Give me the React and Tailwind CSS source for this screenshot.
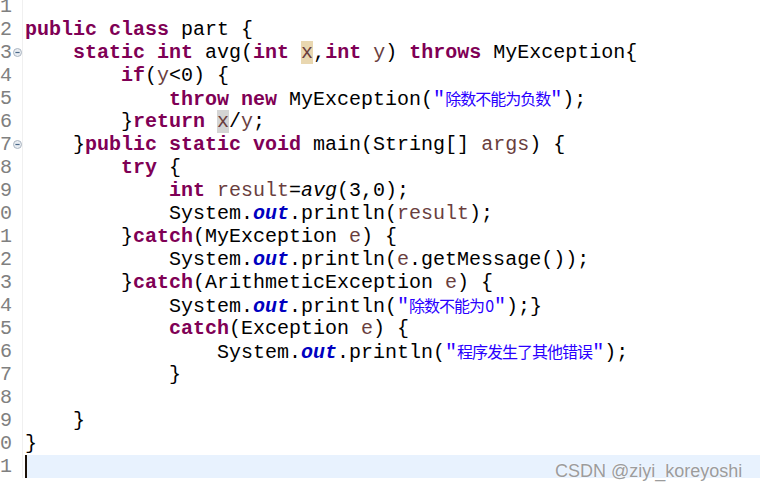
import React from "react";

// token kinds: k keyword, p plain, v local variable, s string, c cjk string text,
// f static field, m static method, hx / hg highlighted occurrences
const lines = [
  [],
  [["public", "k"], [" ", "p"], ["class", "k"], [" part {", "p"]],
  [
    ["    ", "p"], ["static", "k"], [" ", "p"], ["int", "k"], [" avg(", "p"], ["int", "k"], [" ", "p"],
    ["x", "hx"], [",", "p"], ["int", "k"], [" ", "p"], ["y", "v"], [") ", "p"], ["throws", "k"], [" MyException{", "p"],
  ],
  [["        ", "p"], ["if", "k"], ["(", "p"], ["y", "v"], ["<0) {", "p"]],
  [
    ["            ", "p"], ["throw", "k"], [" ", "p"], ["new", "k"], [" MyException(", "p"],
    ['"', "s"], ["除数不能为负数", "c"], ['"', "s"], [");", "p"],
  ],
  [["        }", "p"], ["return", "k"], [" ", "p"], ["x", "hg"], ["/", "p"], ["y", "v"], [";", "p"]],
  [
    ["    }", "p"], ["public", "k"], [" ", "p"], ["static", "k"], [" ", "p"], ["void", "k"],
    [" main(String[] ", "p"], ["args", "v"], [") {", "p"],
  ],
  [["        ", "p"], ["try", "k"], [" {", "p"]],
  [["            ", "p"], ["int", "k"], [" ", "p"], ["result", "v"], ["=", "p"], ["avg", "m"], ["(3,0);", "p"]],
  [["            System.", "p"], ["out", "f"], [".println(", "p"], ["result", "v"], [");", "p"]],
  [["        }", "p"], ["catch", "k"], ["(MyException ", "p"], ["e", "v"], [") {", "p"]],
  [["            System.", "p"], ["out", "f"], [".println(", "p"], ["e", "v"], [".getMessage());", "p"]],
  [["        }", "p"], ["catch", "k"], ["(ArithmeticException ", "p"], ["e", "v"], [") {", "p"]],
  [
    ["            System.", "p"], ["out", "f"], [".println(", "p"],
    ['"', "s"], ["除数不能为", "c"], ["0", "z"], ['"', "s"], [");}", "p"],
  ],
  [["            ", "p"], ["catch", "k"], ["(Exception ", "p"], ["e", "v"], [") {", "p"]],
  [
    ["                System.", "p"], ["out", "f"], [".println(", "p"],
    ['"', "s"], ["程序发生了其他错误", "c"], ['"', "s"], [");", "p"],
  ],
  [["            }", "p"]],
  [],
  [["    }", "p"]],
  [["}", "p"]],
  [],
];

const styles = {
  k: "font-bold text-[#7f0055]",
  p: "text-black",
  v: "text-[#6a3e3e]",
  s: "text-[#2a00ff]",
  c: "text-[#2a00ff] text-[16px] tracking-[-1px] font-['Noto_Sans_CJK_SC',sans-serif]",
  z: "text-[#2a00ff] text-[16px] pl-[1px] font-['Noto_Sans_CJK_SC',sans-serif]",
  f: "font-bold italic text-[#0000c0]",
  m: "italic text-black",
  hx: "text-[#6a3e3e] bg-[#e9d7b0]",
  hg: "text-[#6a3e3e] bg-[#d4d4d4]",
};

function Fold() {
  return (
    <svg width="9" height="9" viewBox="0 0 9 9">
      <circle cx="4.5" cy="4.5" r="4" fill="#e9edf2" stroke="#aab4c0" strokeWidth="1" />
      <line x1="2.4" y1="4.5" x2="6.6" y2="4.5" stroke="#4a6888" strokeWidth="1.2" />
    </svg>
  );
}

export default function App() {
  return (
    <div className="relative w-[760px] h-[493px] bg-white overflow-hidden font-['Liberation_Mono',monospace] text-[20px] leading-[23px]">
      <div className="-mt-[5px] flex flex-col">
        {lines.map((tokens, i) => {
          const n = i + 1;
          const current = n === 21;
          return (
            <div key={n} className="flex h-[23px]">
              <div className="w-[23px] shrink-0 flex items-center border-r border-[#f0f0f0]">
                <div className="w-[12px] shrink-0 flex justify-end text-[#808080] whitespace-nowrap">{n}</div>
                <div className="w-[10px] shrink-0 flex justify-center items-center">
                  {(n === 3 || n === 7) && <Fold />}
                </div>
              </div>
              <div className="w-[2px] shrink-0" />
              <div
                className={
                  current
                    ? "flex-1 whitespace-pre bg-[#e8f2fe] border-l-2 border-[#1a1008]"
                    : "flex-1 whitespace-pre"
                }
              >
                {tokens.map(([t, k], j) => (
                  <span key={j} className={styles[k]}>
                    {t}
                  </span>
                ))}
              </div>
            </div>
          );
        })}
      </div>
      <div className="absolute left-[555px] top-[459px] font-['Liberation_Sans',sans-serif] text-[18px] leading-[24px] text-[#9c9c9c] [text-shadow:0_0_2px_#ffffff]">
        CSDN @ziyi_koreyoshi
      </div>
    </div>
  );
}
